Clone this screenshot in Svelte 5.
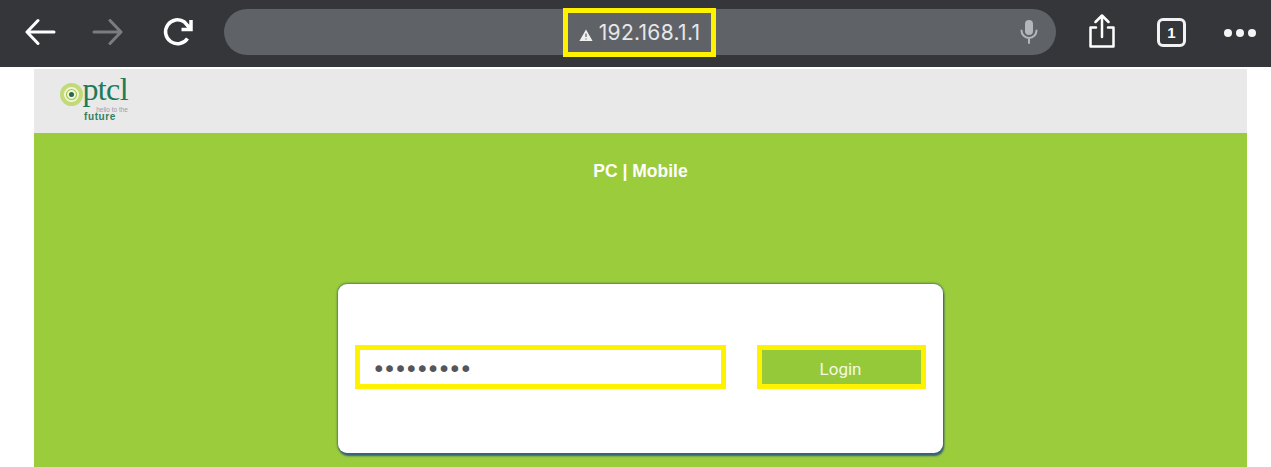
<script>
  let password = $state('•••••••••');
</script>

<div class="page">
  <header class="browser">
    <button class="nav back" aria-label="Back">
      <svg width="32" height="30" viewBox="0 0 32 30"><path d="M29 15H2M13 3.500 2 15l11 11.500" /></svg>
    </button>
    <button class="nav forward" aria-label="Forward">
      <svg width="32" height="30" viewBox="0 0 32 30"><path d="M2 15h27M18 3.500 29 15 18 26.500" /></svg>
    </button>
    <button class="nav reload" aria-label="Reload">
      <svg width="30" height="30" viewBox="0 0 30 30"><path d="M24.500 21.500A12 12 0 1 1 21.500 5L28 12.500M28 3v9.500H18.500" /></svg>
    </button>

    <div class="omnibox">
      <span></span>
      <div class="address">
        <svg width="14" height="12" viewBox="0 0 14 12">
          <path class="warn" d="M7 0.500 13.600 12H0.400z" />
          <path class="bang" d="M7 4.500v3.500M7 9.500v1" />
        </svg>
        <span>192.168.1.1</span>
      </div>
      <svg class="mic" width="20" height="26" viewBox="0 0 20 26">
        <rect x="6" y="1" width="8" height="15" rx="4" class="mic-fill" />
        <path d="M2.500 11.500a7.500 7.500 0 0 0 15 0M10 19v5" />
      </svg>
    </div>

    <div class="tools">
      <svg width="30" height="36" viewBox="0 0 30 36">
        <path d="M9 13.500H3.500v19h23v-19H21M15 23V2M8.500 8 15 1.500 21.500 8" />
      </svg>
      <div class="tabs">1</div>
      <div class="more"><i></i><i></i><i></i></div>
    </div>
  </header>

  <main class="panel">
    <div class="brand">
      <div class="logo">
        <div class="ring"><i></i></div>
        <div class="word">
          <b>ptcl</b>
          <small>hello to the</small>
        </div>
        <em>future</em>
      </div>
    </div>

    <section class="green">
      <p class="switch">PC | Mobile</p>
      <form class="card" onsubmit={(e) => e.preventDefault()}>
        <input class="pass" type="text" bind:value={password} aria-label="Password" />
        <button class="login" type="submit">Login</button>
      </form>
    </section>
  </main>
</div>

<style>
  :global(body) {
    background: #fff;
    overflow: hidden;
  }
  .page {
    width: 1271px;
    height: 467px;
    overflow: hidden;
    font-family: "Liberation Sans", Arial, sans-serif;
  }
  .browser {
    height: 67px;
    box-sizing: border-box;
    background: #35363a;
    display: flex;
    align-items: flex-start;
    padding-top: 9px;
  }
  .nav {
    background: none;
    border: 0;
    padding: 0;
    height: 46px;
    display: flex;
    align-items: center;
    justify-content: center;
  }
  svg path {
    fill: none;
    stroke: #fff;
    stroke-width: 3;
    stroke-linecap: round;
    stroke-linejoin: round;
  }
  .back {
    width: 32px;
    margin-left: 25px;
  }
  .forward {
    width: 32px;
    margin-left: 35px;
    opacity: 0.35;
  }
  .reload {
    width: 30px;
    margin-left: 39px;
  }
  .reload path {
    stroke-width: 3.500;
    stroke-linecap: butt;
    stroke-linejoin: miter;
  }
  .omnibox {
    margin-left: 31px;
    width: 832px;
    height: 46px;
    border-radius: 23px;
    background: #5f6368;
    display: grid;
    grid-template-columns: 1fr auto 1fr;
    align-items: center;
  }
  .address {
    box-sizing: border-box;
    width: 153px;
    height: 49px;
    margin: -1px 0 -2px -1px;
    border: 5px solid #fff200;
    display: flex;
    align-items: center;
    justify-content: center;
    gap: 6px;
    color: #e6e7e8;
    font-family: Inter, "Liberation Sans", sans-serif;
    font-size: 21px;
    letter-spacing: 0.3px;
  }
  .address svg {
    margin-top: 4px;
    flex: none;
  }
  svg .warn {
    fill: #f1f1f1;
    stroke: none;
  }
  svg .bang {
    stroke: #5f6368;
    stroke-width: 1.200;
    stroke-linecap: butt;
  }
  .mic {
    justify-self: end;
    margin-right: 17px;
  }
  .mic path {
    stroke: #b4b7ba;
    stroke-width: 2;
  }
  .mic-fill {
    fill: #b4b7ba;
  }
  .tools {
    display: flex;
    align-items: center;
    height: 46px;
    margin-left: 31px;
    color: #fff;
  }
  .tools svg path {
    stroke-width: 2.500;
  }
  .tabs {
    box-sizing: border-box;
    width: 29px;
    height: 29px;
    margin-left: 40px;
    border: 3px solid #f2f2f2;
    border-radius: 6px;
    display: flex;
    align-items: center;
    justify-content: center;
    font-size: 15px;
    font-weight: 700;
  }
  .more {
    display: flex;
    gap: 4px;
    margin-left: 38px;
    margin-top: 1px;
  }
  .more i {
    width: 8px;
    height: 8px;
    border-radius: 50%;
    background: #f4f4f4;
  }
  .panel {
    width: 1213px;
    margin: 2px 0 0 34px;
  }
  .brand {
    height: 64px;
    background: #e9e9e9;
    padding-left: 26px;
    box-sizing: border-box;
  }
  .logo {
    width: 72px;
    height: 52px;
    padding-top: 7px;
    box-sizing: border-box;
    display: grid;
    grid-template-columns: 24px 1fr;
    align-items: center;
  }
  .ring {
    width: 23px;
    height: 23px;
    box-sizing: border-box;
    border: 4px solid #c3da78;
    border-radius: 50%;
    display: flex;
    align-items: center;
    justify-content: center;
    background: #f1f4d8;
  }
  .ring i {
    width: 5px;
    height: 5px;
    border-radius: 50%;
    background: #1f6b4b;
    box-shadow: 0 0 0 2px #f1f4d8, 0 0 0 3px #9fc445;
  }
  .word {
    display: flex;
    flex-direction: column;
    align-items: flex-end;
    width: 44px;
    height: 36px;
  }
  .word b {
    font-family: "Liberation Serif", serif;
    font-weight: 400;
    font-size: 32px;
    line-height: 26px;
    letter-spacing: -0.6px;
    margin-bottom: 5px;
    color: #1f7a55;
  }
  .word small {
    font-size: 6.500px;
    line-height: 5px;
    color: #a59aa6;
    white-space: nowrap;
  }
  .logo em {
    grid-column: 1 / 3;
    font-style: normal;
    font-size: 10px;
    font-weight: 700;
    line-height: 8px;
    color: #2f7f60;
    padding-left: 24px;
    letter-spacing: 0.6px;
  }
  .green {
    height: 334px;
    background: #9bcc3c;
    overflow: hidden;
  }
  .switch {
    margin: 29px 0 0;
    text-align: center;
    color: #fff;
    font-size: 17.500px;
    font-weight: 700;
    line-height: 18px;
  }
  .card {
    width: 605px;
    height: 169px;
    box-sizing: border-box;
    margin: 104px 0 0 304px;
    padding: 61px 17px 0;
    background: #fff;
    border-radius: 9px;
    box-shadow: 0 0 2px 1px rgba(62, 105, 95, 0.75), 1px 3px 2px #33607c;
    display: flex;
    align-items: flex-start;
    justify-content: space-between;
  }
  .pass {
    box-sizing: border-box;
    width: 371px;
    height: 44px;
    border: 5px solid #fff200;
    border-radius: 0;
    outline: none;
    padding: 4px 0 0 12px;
    background: #fff;
    color: #55555a;
    font-family: "DejaVu Sans", sans-serif;
    font-size: 23px;
    letter-spacing: -2.700px;
  }
  .login {
    box-sizing: border-box;
    width: 169px;
    height: 44px;
    border: 5px solid #fff200;
    background: #96c93a;
    color: #f3f8e6;
    font-family: Roboto, "Liberation Sans", sans-serif;
    font-size: 17px;
    padding: 3px 2px 0 0;
  }
</style>
